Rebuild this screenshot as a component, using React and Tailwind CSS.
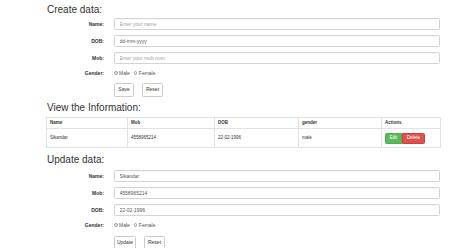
import { useState } from "react";

function Field({ label, value, placeholder }) {
  return (
    <div className="flex items-center">
      <label className="w-[58px] text-right text-[5px] font-bold leading-[6px]">{label}</label>
      <input
        readOnly
        value={value}
        placeholder={placeholder}
        className="ml-[10px] w-[326px] h-[12px] border border-[#d4d4d4] rounded-[1.5px] px-[4.5px] text-[5px] text-[#555] placeholder:text-[#a3a3a3] outline-none shadow-[inset_0_0.5px_0.5px_rgba(0,0,0,0.06)]"
      />
    </div>
  );
}

function Gender() {
  return (
    <div className="flex items-center h-[10px]">
      <span className="w-[58px] text-right text-[5px] font-bold leading-[6px]">Gender:</span>
      <div className="ml-[10px] flex items-center text-[5px] text-[#555] leading-[6px]">
        <span className="w-[3.5px] h-[3.5px] rounded-full border-[0.5px] border-[#999] bg-[#f4f4f4]" />
        <span className="ml-[1.5px]">Male</span>
        <span className="ml-[4px] w-[3.5px] h-[3.5px] rounded-full border-[0.5px] border-[#999] bg-[#f4f4f4]" />
        <span className="ml-[1.5px]">Female</span>
      </div>
    </div>
  );
}

function Buttons({ first, firstW }) {
  return (
    <div className="flex items-center pl-[68px] gap-[8px]">
      <button className={`${firstW} h-[14px] border border-[#ccc] rounded-[1.5px] bg-white text-[5px] text-[#333]`}>
        {first}
      </button>
      <button className="w-[21px] h-[14px] border border-[#ccc] rounded-[1.5px] bg-white text-[5px] text-[#333]">
        Reset
      </button>
    </div>
  );
}

export default function App() {
  const [row] = useState({ name: "Sikandar", mob: "4558965214", dob: "22-02-1996", gender: "male" });

  return (
    <div className="w-[474px] h-[248px] overflow-hidden bg-white text-[#333] font-['Liberation_Sans',Arial,sans-serif]">
      <div className="ml-[46px] w-[394px] pt-[3.5px]">
        <h3 className="ml-[1px] text-[10px] leading-[11px]">Create data:</h3>
        <div className="mt-[3.5px] flex flex-col gap-[5px]">
          <Field label="Name:" placeholder="Enter your name" />
          <Field label="DOB:" value="dd-mm-yyyy" />
          <Field label="Mob:" placeholder="Enter your mob num" />
        </div>
        <div className="mt-[4px]">
          <Gender />
        </div>
        <div className="mt-[5px]">
          <Buttons first="Save" firstW="w-[20px]" />
        </div>

        <h3 className="ml-[1px] mt-[4.5px] text-[10px] leading-[11px]">View the Information:</h3>
        <table className="mt-[4.5px] w-[394px] table-fixed border-collapse border border-[#e2e2e2] text-[4.5px]">
          <colgroup>
            <col className="w-[81px]" />
            <col className="w-[87px]" />
            <col className="w-[84px]" />
            <col className="w-[83px]" />
            <col className="w-[59px]" />
          </colgroup>
          <thead>
            <tr className="h-[11px] text-left">
              <th className="px-[3px] font-bold border border-[#e2e2e2]">Name</th>
              <th className="px-[3px] font-bold border border-[#e2e2e2]">Mob</th>
              <th className="px-[3px] font-bold border border-[#e2e2e2]">DOB</th>
              <th className="px-[3px] font-bold border border-[#e2e2e2]">gender</th>
              <th className="px-[3px] font-bold border border-[#e2e2e2]">Actions</th>
            </tr>
          </thead>
          <tbody>
            <tr className="h-[19px]">
              <td className="px-[3px] border border-[#e2e2e2]">{row.name}</td>
              <td className="px-[3px] border border-[#e2e2e2]">{row.mob}</td>
              <td className="px-[3px] border border-[#e2e2e2]">{row.dob}</td>
              <td className="px-[3px] border border-[#e2e2e2]">{row.gender}</td>
              <td className="px-[3px] border border-[#e2e2e2]">
                <div className="flex">
                  <button className="w-[17px] h-[11px] bg-[#5cb85c] border-[0.5px] border-[#4cae4c] rounded-l-[1.5px] text-white text-[4.5px]">Edit</button>
                  <button className="w-[23px] h-[11px] bg-[#d9534f] border-[0.5px] border-[#d43f3a] rounded-r-[1.5px] text-white text-[4.5px]">Delete</button>
                </div>
              </td>
            </tr>
          </tbody>
        </table>

        <h3 className="ml-[1px] mt-[5.5px] text-[10px] leading-[11px]">Update data:</h3>
        <div className="mt-[5.5px] flex flex-col gap-[5px]">
          <Field label="Name:" value={row.name} />
          <Field label="Mob:" value={row.mob} />
          <Field label="DOB:" value={row.dob} />
        </div>
        <div className="mt-[4px]">
          <Gender />
        </div>
        <div className="mt-[6px]">
          <Buttons first="Update" firstW="w-[22px]" />
        </div>
      </div>
    </div>
  );
}
